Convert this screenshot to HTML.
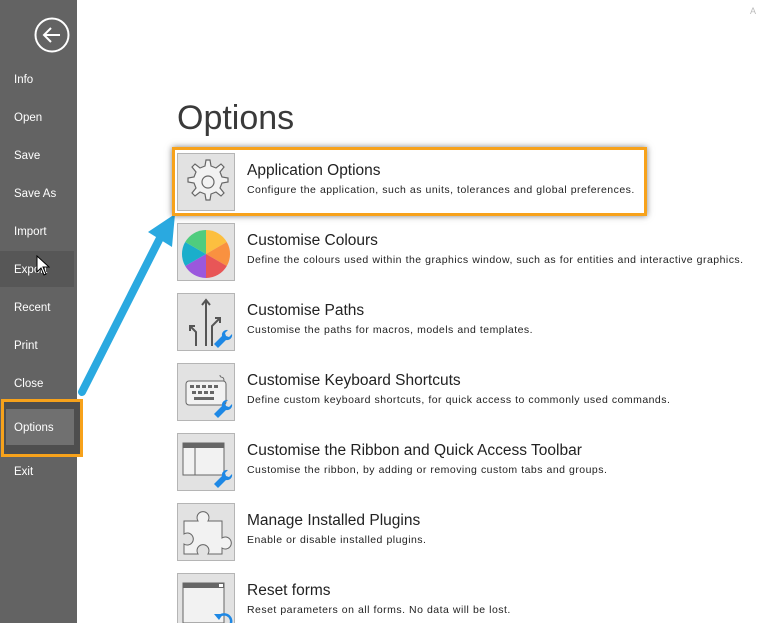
<!DOCTYPE html>
<html><head><style>
html,body{margin:0;width:759px;height:623px;overflow:hidden}
body{background:#fff;position:relative;font-family:"Liberation Sans",sans-serif}
.side{position:absolute;left:0;top:0;width:77px;height:623px;background:#636363}
.mi{position:absolute;left:14px;color:#fff;font-size:11.5px}
.ic{position:absolute;left:177px;width:56px;height:56px;background:#e2e2e2;border:1px solid #b5b5b5}
.t{position:absolute;left:247px;font-size:15.5px;color:#222}
.d{position:absolute;left:247px;font-size:10.5px;color:#222;letter-spacing:0.47px;word-spacing:0.2px}
</style></head><body>
<div class="side"></div>
<svg style="position:absolute;left:34px;top:17px" width="36" height="36"><circle cx="18" cy="18" r="16.5" fill="none" stroke="#fff" stroke-width="2"/><path d="M26 18H10M17 11l-7 7 7 7" fill="none" stroke="#fff" stroke-width="2"/></svg>
<div style="position:absolute;left:0;top:251px;width:74px;height:36px;background:#575757"></div>
<div class="mi" style="top:74px">Info</div>
<div class="mi" style="top:112px">Open</div>
<div class="mi" style="top:150px">Save</div>
<div class="mi" style="top:188px">Save As</div>
<div class="mi" style="top:226px">Import</div>
<div class="mi" style="top:264px">Export</div>
<svg style="position:absolute;left:36px;top:255px" width="14" height="22"><path d="M1 1v16l4-4 3 7 2-1-3-7h6z" fill="#fff" stroke="#000" stroke-width="1"/></svg>
<div class="mi" style="top:302px">Recent</div>
<div class="mi" style="top:340px">Print</div>
<div class="mi" style="top:378px">Close</div>
<div style="position:absolute;left:1px;top:399px;width:76px;height:52px;border:3px solid #f7a21b;background:#4e4e4e"></div>
<div style="position:absolute;left:6px;top:409px;width:68px;height:36px;background:#707070"></div>
<div class="mi" style="top:422px">Options</div>
<div class="mi" style="top:466px">Exit</div>
<div style="position:absolute;left:750px;top:6px;font-size:9px;color:#bbb">A</div>
<div style="position:absolute;left:177px;top:99px;font-size:34px;color:#3a3a3a">Options</div>
<svg style="position:absolute;left:0;top:0" width="759" height="623"><path d="M82 392L160 238" stroke="#2aa9e0" stroke-width="8" stroke-linecap="round"/><path d="M148 232L175 214 172 247z" fill="#2aa9e0"/></svg>
<div style="position:absolute;left:172px;top:147px;width:469px;height:63px;border:3px solid #f7a21b;box-shadow:0 0 6px rgba(0,0,0,.5)"></div>
<div class="ic" style="top:153px"><svg width="56" height="56"><path d="M28 6l4 0 1 6 5 2 5-4 3 3-4 5 2 5 6 1v4l-6 1-2 5 4 5-3 3-5-4-5 2-1 6h-4l-1-6-5-2-5 4-3-3 4-5-2-5-6-1v-4l6-1 2-5-4-5 3-3 5 4 5-2z" fill="#f2f2f2" stroke="#666" stroke-width="1.2"/><circle cx="30" cy="28" r="6" fill="none" stroke="#666" stroke-width="1.2"/></svg></div>
<div class="t" style="top:162px">Application Options</div>
<div class="d" style="top:184px">Configure the application, such as units, tolerances and global preferences.</div>
<div class="ic" style="top:223px"><svg width="56" height="56"><g transform="translate(28,30)"><path d="M0 0L0-24A24 24 0 0 1 20.8-12z" fill="#fcbf3f"/><path d="M0 0L20.8-12A24 24 0 0 1 20.8 12z" fill="#f99140"/><path d="M0 0L20.8 12A24 24 0 0 1 0 24z" fill="#e85657"/><path d="M0 0L0 24A24 24 0 0 1-20.8 12z" fill="#9b58dd"/><path d="M0 0L-20.8 12A24 24 0 0 1-20.8-12z" fill="#1aaecb"/><path d="M0 0L-20.8-12A24 24 0 0 1 0-24z" fill="#4fcc7e"/></g></svg></div>
<div class="t" style="top:232px">Customise Colours</div>
<div class="d" style="top:254px">Define the colours used within the graphics window, such as for entities and interactive graphics.</div>
<div class="ic" style="top:293px"><svg width="56" height="56"><g fill="none" stroke="#555" stroke-width="2"><path d="M28 52V6M24 11l4-5 4 5"/><path d="M18 52V38l-6-6M12 37v-5h5"/><path d="M34 52V32l8-8M37 24h5v5"/></g><path d="M40 54l8-8a5 5 0 0 0 6-6l-3 3-3-1-1-3 3-3a5 5 0 0 0-6 6l-8 8z" fill="#1e88e5"/></svg></div>
<div class="t" style="top:302px">Customise Paths</div>
<div class="d" style="top:324px">Customise the paths for macros, models and templates.</div>
<div class="ic" style="top:363px"><svg width="56" height="56"><path d="M46 17c0-6-4-2-4-6" fill="none" stroke="#666"/><rect x="8" y="17" width="40" height="24" rx="3" fill="#f2f2f2" stroke="#666"/><g fill="#666"><rect x="12" y="21" width="4" height="3"/><rect x="18" y="21" width="4" height="3"/><rect x="24" y="21" width="4" height="3"/><rect x="30" y="21" width="4" height="3"/><rect x="36" y="21" width="4" height="3"/><rect x="14" y="27" width="4" height="3"/><rect x="20" y="27" width="4" height="3"/><rect x="26" y="27" width="4" height="3"/><rect x="32" y="27" width="4" height="3"/><rect x="16" y="33" width="20" height="3"/></g><path d="M40 54l8-8a5 5 0 0 0 6-6l-3 3-3-1-1-3 3-3a5 5 0 0 0-6 6l-8 8z" fill="#1e88e5"/></svg></div>
<div class="t" style="top:372px">Customise Keyboard Shortcuts</div>
<div class="d" style="top:394px">Define custom keyboard shortcuts, for quick access to commonly used commands.</div>
<div class="ic" style="top:433px"><svg width="56" height="56"><rect x="5" y="9" width="41" height="32" fill="#f2f2f2" stroke="#666"/><rect x="5" y="9" width="41" height="5" fill="#666"/><path d="M17 14v27" stroke="#666"/><path d="M40 54l8-8a5 5 0 0 0 6-6l-3 3-3-1-1-3 3-3a5 5 0 0 0-6 6l-8 8z" fill="#1e88e5"/></svg></div>
<div class="t" style="top:442px">Customise the Ribbon and Quick Access Toolbar</div>
<div class="d" style="top:464px">Customise the ribbon, by adding or removing custom tabs and groups.</div>
<div class="ic" style="top:503px"><svg width="56" height="56"><path d="M6 17h14a6 6 0 1 1 10 0h14v17a6 6 0 1 1 0 10v6H30a6 6 0 1 0-10 0H6V40a6 6 0 1 0 0-10z" fill="#f2f2f2" stroke="#666"/></svg></div>
<div class="t" style="top:512px">Manage Installed Plugins</div>
<div class="d" style="top:534px">Enable or disable installed plugins.</div>
<div class="ic" style="top:573px"><svg width="56" height="56"><rect x="5" y="9" width="41" height="40" fill="#f2f2f2" stroke="#666"/><rect x="5" y="9" width="41" height="5" fill="#666"/><rect x="41" y="10" width="4" height="3" fill="#fff"/><path d="M40 44a7 7 0 1 1 4 10" fill="none" stroke="#1e88e5" stroke-width="2.5"/><path d="M36 40l5 6 4-6z" fill="#1e88e5"/></svg></div>
<div class="t" style="top:582px">Reset forms</div>
<div class="d" style="top:604px">Reset parameters on all forms. No data will be lost.</div>
</body></html>
